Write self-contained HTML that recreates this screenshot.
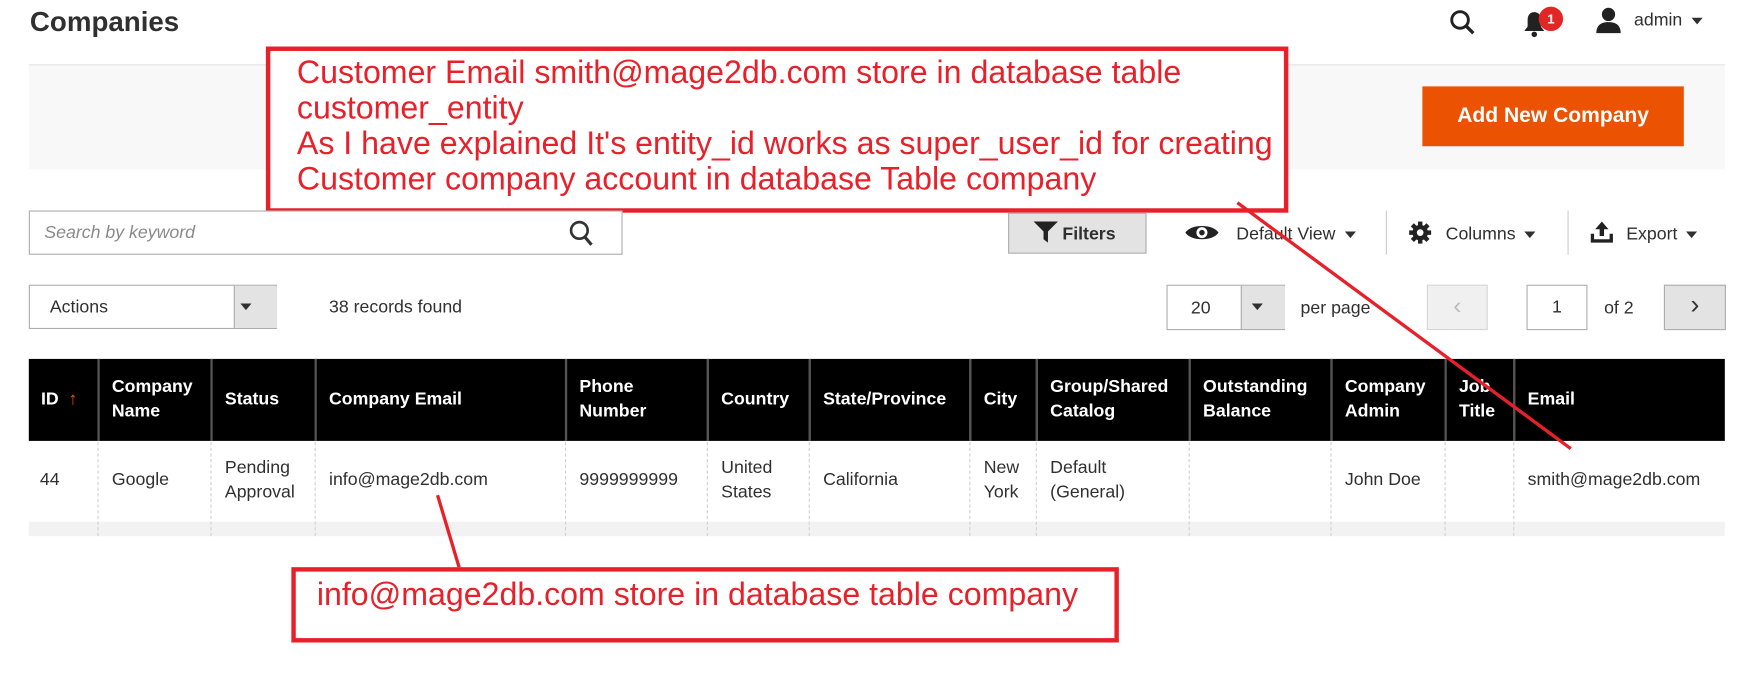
<!DOCTYPE html>
<html><head><meta charset="utf-8"><style>
html,body{margin:0;padding:0;background:#fff;overflow:hidden;width:1737px;height:696px}
#w{position:absolute;left:0;top:0;width:1568px;height:628px;transform:scale(1.10778);transform-origin:0 0;font-family:"Liberation Sans",sans-serif;color:#303030}
.a{position:absolute}
.t{font-size:16px;white-space:nowrap}
.hd{position:absolute;top:324px;height:74px;background:#000;border-left:2px solid #555;box-sizing:border-box;color:#fff;font-weight:bold;font-size:16px;line-height:22px;display:flex;align-items:center;padding-left:11px}
.rw{position:absolute;top:399px;height:85px;border-left:1px dashed #d0d0d0;box-sizing:border-box;font-size:16px;line-height:22px;padding-left:12px}
.rw span{position:absolute;top:35px;transform:translateY(-50%);white-space:nowrap}
.red{color:#e8202a;font-size:29px;line-height:32px;white-space:nowrap}
.tri{display:inline-block;width:0;height:0;border-left:5px solid transparent;border-right:5px solid transparent;border-top:6px solid #303030;vertical-align:middle;margin-left:8px}
</style></head><body><div id="w">
<div class="a" style="left:27px;top:6px;font-size:25px;font-weight:bold;color:#303030">Companies</div>
<svg class="a" style="left:1308px;top:8px" width="26" height="26" viewBox="0 0 26 26"><circle cx="10" cy="10" r="7.5" fill="none" stroke="#222" stroke-width="2.6"/><line x1="15.5" y1="15.5" x2="22" y2="22" stroke="#222" stroke-width="3"/></svg>
<svg class="a" style="left:1374px;top:9px" width="22" height="26" viewBox="0 0 22 26"><path d="M11 2c-4 0-6 3-6 7v6l-3 4h18l-3-4V9c0-4-2-7-6-7z" fill="#222"/><circle cx="11" cy="22" r="2.5" fill="#222"/></svg>
<div class="a" style="left:1389px;top:6px;width:22px;height:22px;border-radius:50%;background:#e22626;color:#fff;font-weight:bold;font-size:12px;text-align:center;line-height:22px">1</div>
<svg class="a" style="left:1440px;top:6px" width="24" height="24" viewBox="0 0 24 24"><circle cx="12" cy="7" r="6" fill="#222"/><path d="M1 24c0-7 4-10 11-10s11 3 11 10z" fill="#222"/></svg>
<div class="a t" style="left:1475px;top:10px;font-size:16px">admin<span class="tri"></span></div>
<div class="a" style="left:26px;top:58px;width:1531px;height:94px;background:#f8f8f8;border-top:1px solid #e3e3e3"></div>
<div class="a" style="left:1284px;top:78px;width:236px;height:54px;background:#eb5202;color:#fff;font-weight:bold;font-size:19px;text-align:center;line-height:54px">Add New Company</div>
<div class="a" style="left:240px;top:42px;width:915px;height:142px;border:4px solid #e8202a;background:#fff"></div>
<div class="a red" style="left:268px;top:50px">Customer Email smith@mage2db.com store in database table<br>customer_entity<br>As I have explained It's entity_id works as super_user_id for creating<br>Customer company account in database Table company</div>
<div class="a" style="left:26px;top:190px;width:534px;height:38px;border:1px solid #adadad;background:#fff"></div>
<div class="a t" style="left:40px;top:202px;color:#8a8a8a;font-style:italic">Search by keyword</div>
<svg class="a" style="left:513px;top:198px" width="24" height="26" viewBox="0 0 24 26"><circle cx="10" cy="10" r="7.5" fill="none" stroke="#333" stroke-width="2.4"/><line x1="15" y1="16" x2="21" y2="23" stroke="#333" stroke-width="2.8"/></svg>
<div class="a" style="left:910px;top:192px;width:125px;height:37px;background:#e3e3e3;border:1px solid #adadad;box-sizing:border-box"></div>
<svg class="a" style="left:933px;top:200px" width="22" height="20" viewBox="0 0 22 20"><path d="M0 0h22L13 9v10l-4-3V9z" fill="#222"/></svg>
<div class="a t" style="left:959px;top:203px;font-weight:bold;color:#303030">Filters</div>
<svg class="a" style="left:1069px;top:200px" width="32" height="20" viewBox="0 0 32 20"><path d="M1 10C6 2 26 2 31 10 26 18 6 18 1 10z" fill="#222"/><circle cx="16" cy="10" r="5" fill="#fff"/><circle cx="16" cy="10" r="2.5" fill="#222"/></svg>
<div class="a t" style="left:1116px;top:203px">Default View<span class="tri"></span></div>
<div class="a" style="left:1251px;top:190px;width:1px;height:40px;background:#ccc"></div>
<svg class="a" style="left:1272px;top:200px" width="20" height="20" viewBox="0 0 20 20"><g fill="#222"><rect x="8" y="0" width="4" height="20"/><rect x="0" y="8" width="20" height="4"/><rect x="8" y="0" width="4" height="20" transform="rotate(45 10 10)"/><rect x="8" y="0" width="4" height="20" transform="rotate(-45 10 10)"/><circle cx="10" cy="10" r="7"/></g><circle cx="10" cy="10" r="3" fill="#fff"/></svg>
<div class="a t" style="left:1305px;top:203px">Columns<span class="tri"></span></div>
<div class="a" style="left:1415px;top:190px;width:1px;height:40px;background:#ccc"></div>
<svg class="a" style="left:1435px;top:200px" width="22" height="20" viewBox="0 0 22 20"><path d="M11 0l6 7h-4v6H9V7H5z M1 11h3v5h14v-5h3v8H1z" fill="#222"/></svg>
<div class="a t" style="left:1468px;top:203px">Export<span class="tri"></span></div>
<div class="a" style="left:26px;top:257px;width:222px;height:38px;border:1px solid #adadad;background:#fff"></div>
<div class="a" style="left:211px;top:258px;width:38px;height:38px;background:#e3e3e3;border-left:1px solid #adadad"></div>
<div class="a tri" style="left:217px;top:274px;margin:0"></div>
<div class="a t" style="left:45px;top:269px">Actions</div>
<div class="a t" style="left:297px;top:269px">38 records found</div>
<div class="a" style="left:1053px;top:257px;width:105px;height:39px;border:1px solid #adadad;background:#fff"></div>
<div class="a" style="left:1120px;top:258px;width:39px;height:39px;background:#e3e3e3;border-left:1px solid #adadad"></div>
<div class="a tri" style="left:1130px;top:274px;margin:0"></div>
<div class="a t" style="left:1075px;top:270px">20</div>
<div class="a t" style="left:1174px;top:270px">per page</div>
<div class="a" style="left:1288px;top:257px;width:53px;height:39px;border:1px solid #d6d6d6;background:#f0f0f0;color:#bbb;font-size:22px;text-align:center;line-height:36px">&#x2039;</div>
<div class="a" style="left:1378px;top:257px;width:53px;height:39px;border:1px solid #adadad;background:#fff;text-align:center;line-height:40px;font-size:16px">1</div>
<div class="a t" style="left:1448px;top:270px">of 2</div>
<div class="a" style="left:1502px;top:257px;width:54px;height:39px;border:1px solid #adadad;background:#e3e3e3;color:#333;font-size:24px;text-align:center;line-height:36px">&#x203A;</div>
<div class="a" style="left:26px;top:471px;width:1531px;height:13px;background:#f2f2f2"></div>
<div class="hd" style="left:26px;width:62px;border-left:0">ID&nbsp;&nbsp;<span style="color:#eb5202">&#8593;</span></div>
<div class="hd" style="left:88px;width:102px">Company<br>Name</div>
<div class="hd" style="left:190px;width:94px">Status</div>
<div class="hd" style="left:284px;width:226px">Company Email</div>
<div class="hd" style="left:510px;width:128px">Phone<br>Number</div>
<div class="hd" style="left:638px;width:92px">Country</div>
<div class="hd" style="left:730px;width:145px">State/Province</div>
<div class="hd" style="left:875px;width:60px">City</div>
<div class="hd" style="left:935px;width:138px">Group/Shared<br>Catalog</div>
<div class="hd" style="left:1073px;width:128px">Outstanding<br>Balance</div>
<div class="hd" style="left:1201px;width:103px">Company<br>Admin</div>
<div class="hd" style="left:1304px;width:62px">Job<br>Title</div>
<div class="hd" style="left:1366px;width:191px">Email</div>
<div class="rw" style="left:26px;width:62px;border-left:0;padding-left:10px"><span>44</span></div>
<div class="rw" style="left:88px;width:102px"><span>Google</span></div>
<div class="rw" style="left:190px;width:94px"><span>Pending<br>Approval</span></div>
<div class="rw" style="left:284px;width:226px"><span>info@mage2db.com</span></div>
<div class="rw" style="left:510px;width:128px"><span>9999999999</span></div>
<div class="rw" style="left:638px;width:92px"><span>United<br>States</span></div>
<div class="rw" style="left:730px;width:145px"><span>California</span></div>
<div class="rw" style="left:875px;width:60px"><span>New<br>York</span></div>
<div class="rw" style="left:935px;width:138px"><span>Default<br>(General)</span></div>
<div class="rw" style="left:1073px;width:128px"></div>
<div class="rw" style="left:1201px;width:103px"><span>John Doe</span></div>
<div class="rw" style="left:1304px;width:62px"></div>
<div class="rw" style="left:1366px;width:191px"><span>smith@mage2db.com</span></div>
<svg class="a" style="left:0;top:0" width="1568" height="628"><line x1="1117" y1="183" x2="1418" y2="405" stroke="#e8202a" stroke-width="3"/><line x1="395" y1="447" x2="415" y2="514" stroke="#e8202a" stroke-width="3"/></svg>
<div class="a" style="left:263px;top:512px;width:739px;height:60px;border:4px solid #e8202a;background:#fff"></div>
<div class="a red" style="left:286px;top:521px">info@mage2db.com store in database table company</div>
</div></body></html>
